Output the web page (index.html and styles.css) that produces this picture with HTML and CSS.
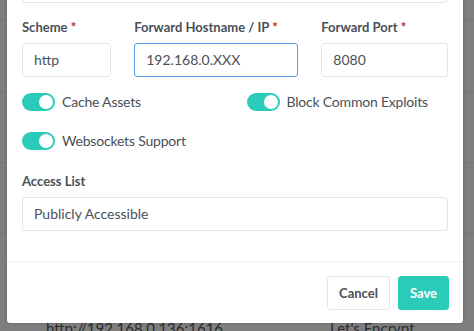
FILE: index.html
```html
<!DOCTYPE html>
<html lang="en">
  <head>
    <meta charset="UTF-8" />
    <meta name="viewport" content="width=device-width, initial-scale=1.0" />
    <title>Edit Proxy Host</title>
    <link rel="stylesheet" href="styles.css">
  </head>
  <body>
    <div class="page">
      <div class="row-line"></div>
      <div class="row-line"></div>
      <div class="row-line"></div>
      <div class="row-line"></div>
      <div class="row-text">
        <span class="dest">http://192.168.0.136:1616</span>
        <span class="ssl">Let's Encrypt</span>
      </div>
    </div>

    <div class="modal">
      <div class="modal-body">
        <div class="form-group">
          <div class="form-control"></div>
        </div>

        <div class="row">
          <div class="col col-3">
            <label class="form-label">Scheme <span class="req">*</span></label>
            <div class="form-control">http</div>
          </div>
          <div class="col col-5">
            <label class="form-label">Forward Hostname / IP <span class="req">*</span></label>
            <div class="form-control focus">192.168.0.XXX</div>
          </div>
          <div class="col col-4">
            <label class="form-label">Forward Port <span class="req">*</span></label>
            <div class="form-control">8080</div>
          </div>
        </div>

        <div class="row switches">
          <div class="col col-6">
            <label class="switch"><span class="track"></span> Cache Assets</label>
          </div>
          <div class="col col-6">
            <label class="switch"><span class="track"></span> Block Common Exploits</label>
          </div>
        </div>
        <div class="row switches">
          <div class="col col-6">
            <label class="switch"><span class="track"></span> Websockets Support</label>
          </div>
        </div>

        <div class="form-group access">
          <label class="form-label">Access List</label>
          <div class="form-control">Publicly Accessible</div>
        </div>
      </div>
      <div class="modal-footer">
        <button class="btn btn-secondary">Cancel</button>
        <button class="btn btn-teal">Save</button>
      </div>
    </div>
  </body>
</html>
```

FILE: styles.css
```css
html,
body {
  margin: 0;
  height: 100%;
  overflow: hidden;
}
body {
  font-family: Lato, "Noto Sans", sans-serif;
  background-color: #7e7e7e;
  color: #495057;
}

.page {
  padding-top: 20px;
}
.row-line {
  height: 70px;
  border-top: 1px solid #767676;
}
.row-text {
  position: relative;
  font-size: 15px;
  line-height: 18px;
  color: #2b2b2b;
}
.row-text .dest {
  position: absolute;
  left: 46px;
  top: 15px;
}
.row-text .ssl {
  position: absolute;
  left: 330px;
  top: 15px;
}

.modal {
  position: absolute;
  left: 7px;
  top: -31px;
  width: 456px;
  background-color: #fff;
  border-radius: 3px;
  box-shadow: 0 0 3px rgba(0, 0, 0, 0.25);
}
.modal-body {
  padding: 0 15px 14px;
}
.form-group {
  margin-bottom: 16px;
}
.form-control {
  box-sizing: border-box;
  height: 34px;
  padding: 0 11px;
  border: 1px solid #e3e6ea;
  border-radius: 3px;
  font-size: 14px;
  line-height: 32px;
  color: #495057;
}
.form-control.focus {
  border-color: #5b9be6;
}
.form-label {
  display: block;
  font-size: 13px;
  font-weight: 700;
  line-height: 16px;
  margin-bottom: 8px;
  color: #495057;
}
.req {
  color: #cd201f;
}

.row {
  display: flex;
  margin: 0 -11.5px;
}
.col {
  box-sizing: border-box;
  padding: 0 11.5px;
}
.col-3 {
  width: 25%;
}
.col-4 {
  width: 33.333%;
}
.col-5 {
  width: 41.667%;
}
.col-6 {
  width: 50%;
}

.switches {
  margin-top: 16px;
}
.switches + .switches {
  margin-top: 21px;
}
.switch {
  display: flex;
  align-items: center;
  gap: 7px;
  font-size: 14px;
  letter-spacing: -0.2px;
  line-height: 18px;
  color: #495057;
}
.track {
  position: relative;
  width: 33px;
  height: 18px;
  border-radius: 9px;
  background-color: #2bcbba;
}
.track::after {
  content: "";
  position: absolute;
  right: 2px;
  top: 2px;
  width: 14px;
  height: 14px;
  border-radius: 50%;
  background-color: #fff;
}

.access {
  margin-top: 23px;
}

.modal-footer {
  display: flex;
  justify-content: flex-end;
  gap: 8px;
  padding: 14px 14px 13px;
  border-top: 1px solid #eef0f2;
}
.btn {
  height: 34px;
  padding: 0 11px;
  border-radius: 3px;
  font-family: Lato, "Noto Sans", sans-serif;
  font-size: 13px;
  font-weight: 700;
}
.btn-secondary {
  border: 1px solid #e3e6ea;
  background-color: #fff;
  color: #495057;
}
.btn-teal {
  border: 1px solid #2bcbba;
  background-color: #2bcbba;
  color: #fff;
}
```
